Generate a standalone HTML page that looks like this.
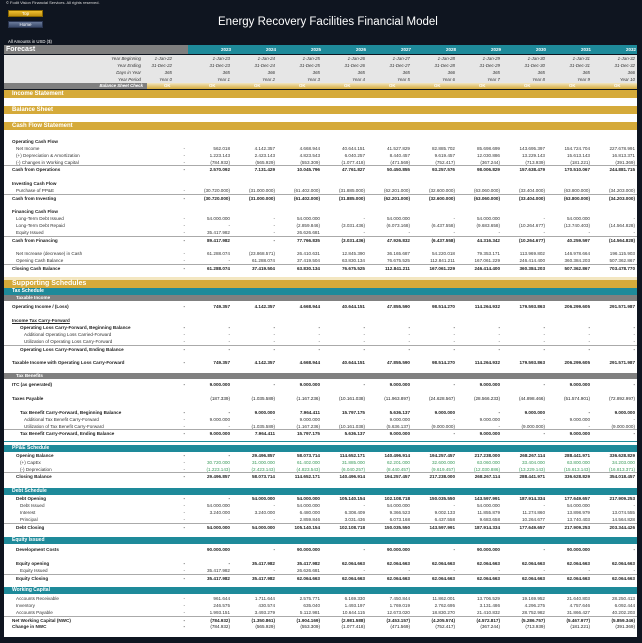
<!DOCTYPE html>
<html><head><meta charset="utf-8">
<style>
*{margin:0;padding:0;box-sizing:border-box}
body{width:642px;height:643px;background:#0f1520;position:relative;overflow:hidden;font-family:"Liberation Sans",sans-serif}
.white{position:absolute;left:4px;top:90px;width:633px;height:547px;background:#fff}
.r{position:absolute;left:4px;width:633px;height:7px;display:flex;font-size:4.6px;line-height:7px;color:#333;white-space:nowrap}
.r i{font-style:normal;width:137px;padding-left:8px;overflow:hidden}
.r s{text-decoration:none;width:45px;text-align:right;padding-right:1px}
.b{font-weight:bold;color:#222}
.t{border-top:1px solid #aaa}
.i1 i{padding-left:12px}.i2 i{padding-left:16px}.i3 i{padding-left:20px}
.g s{color:#3a9a5a}
.bar{position:absolute;left:4px;width:633px;color:#fff;font-weight:bold;padding-left:8px}
.gold{background:#d5aa3a;height:8px;font-size:6px;line-height:8px}
.teal{background:#1e8a9a;height:7px;font-size:5px;line-height:7px}
.grey{background:#808080;height:6px;font-size:4.6px;line-height:6px}
.hd{position:absolute;left:4px;width:633px;height:7px;display:flex;font-size:4.4px;line-height:7px;color:#333;font-style:italic;background:#e6e6e6}
.hd i{width:141px;text-align:right;padding-right:4px}
.hd s{text-decoration:none;width:45px;text-align:right;padding-right:1px}
.hd s:nth-of-type(1){width:28px}
.hd s:nth-of-type(2){width:58px}
</style></head><body>
<div style="position:absolute;left:6px;top:0;font-size:4px;color:#ddd">© Fodit Vision Financial Services. All rights reserved.</div>
<div style="position:absolute;left:8px;top:10px;width:35px;height:7px;background:linear-gradient(#f0c030,#c09010);border:1px solid #886600;font-size:4.5px;color:#fff;text-align:center;line-height:5px">Top</div>
<div style="position:absolute;left:8px;top:21px;width:35px;height:7px;background:linear-gradient(#6a7a9a,#3a4a6a);border:1px solid #2a3550;font-size:4.5px;color:#fff;text-align:center;line-height:5px">Home</div>
<div style="position:absolute;left:218px;top:16px;font-size:11.5px;color:#fff">Energy Recovery Facilities Financial Model</div>
<div style="position:absolute;left:8px;top:39px;font-size:4.3px;color:#fff">All Amounts in USD ($)</div>

<div style="position:absolute;left:4px;top:45px;width:184px;height:9px;background:#7f7f7f;color:#fff;font-weight:bold;font-size:7px;line-height:9px;padding-left:2px">Forecast</div>
<div style="position:absolute;left:188px;top:45px;width:449px;height:9px;background:#1e8a9a;display:flex;font-size:4.5px;line-height:9px;color:#fff;font-weight:bold">
<span style="width:43px;text-align:right">2023</span><span style="width:45px;text-align:right">2024</span><span style="width:45px;text-align:right">2025</span><span style="width:45px;text-align:right">2026</span><span style="width:45px;text-align:right">2027</span><span style="width:45px;text-align:right">2028</span><span style="width:45px;text-align:right">2029</span><span style="width:45px;text-align:right">2030</span><span style="width:45px;text-align:right">2031</span><span style="width:45px;text-align:right">2032</span></div>
<div class="hd" style="top:55px"><i>Year Beginning</i><s>1-Jan-22</s><s>1-Jan-23</s><s>1-Jan-24</s><s>1-Jan-25</s><s>1-Jan-26</s><s>1-Jan-27</s><s>1-Jan-28</s><s>1-Jan-29</s><s>1-Jan-30</s><s>1-Jan-31</s><s>1-Jan-32</s></div>
<div class="hd" style="top:62px"><i>Year Ending</i><s>31-Dec-22</s><s>31-Dec-23</s><s>31-Dec-24</s><s>31-Dec-25</s><s>31-Dec-26</s><s>31-Dec-27</s><s>31-Dec-28</s><s>31-Dec-29</s><s>31-Dec-30</s><s>31-Dec-31</s><s>31-Dec-32</s></div>
<div class="hd" style="top:69px"><i>Days in Year</i><s>365</s><s>365</s><s>366</s><s>365</s><s>365</s><s>365</s><s>366</s><s>365</s><s>365</s><s>365</s><s>366</s></div>
<div class="hd" style="top:76px"><i>Year Period</i><s>Year 0</s><s>Year 1</s><s>Year 2</s><s>Year 3</s><s>Year 4</s><s>Year 5</s><s>Year 6</s><s>Year 7</s><s>Year 8</s><s>Year 9</s><s>Year 10</s></div>
<div style="position:absolute;left:4px;top:83px;width:143px;height:6px;background:#7f7f7f;color:#fff;font-style:italic;font-weight:bold;font-size:4.3px;line-height:6px;text-align:right;padding-right:4px">Balance Sheet Check</div>
<div style="position:absolute;left:147px;top:83px;width:490px;height:6px;background:linear-gradient(#f3e6c0,#d5aa3a);display:flex;font-size:4.3px;line-height:6px;color:#fff;font-weight:bold">
<span style="width:45px;padding-left:17px">OK</span><span style="width:45px;padding-left:17px">OK</span><span style="width:45px;padding-left:17px">OK</span><span style="width:45px;padding-left:17px">OK</span><span style="width:45px;padding-left:17px">OK</span><span style="width:45px;padding-left:17px">OK</span><span style="width:45px;padding-left:17px">OK</span><span style="width:45px;padding-left:17px">OK</span><span style="width:45px;padding-left:17px">OK</span><span style="width:45px;padding-left:17px">OK</span><span style="width:40px;padding-left:17px">OK</span></div>

<div class="white"></div>
<div class="bar gold" style="top:90px">Income Statement</div>
<div class="bar gold" style="top:106px">Balance Sheet</div>
<div class="bar gold" style="top:122px">Cash Flow Statement</div>

<div class="r b" style="top:138px"><i>Operating Cash Flow</i></div>
<div class="r i1" style="top:145px"><i>Net Income</i><s>-</s><s>562.018</s><s>4.142.357</s><s>4.668.944</s><s>40.644.151</s><s>41.527.829</s><s>82.885.702</s><s>85.698.699</s><s>143.695.397</s><s>154.724.704</s><s>227.678.991</s></div>
<div class="r i1" style="top:152px"><i>(+) Depreciation &amp; Amortization</i><s>-</s><s>1.223.143</s><s>2.423.143</s><s>4.823.543</s><s>6.040.257</s><s>8.440.457</s><s>9.619.457</s><s>12.030.886</s><s>13.229.143</s><s>15.613.143</s><s>16.813.371</s></div>
<div class="r i1" style="top:159px"><i>(-) Changes in Working Capital</i><s>-</s><s>(784.932)</s><s>(565.929)</s><s>(553.309)</s><s>(1.077.418)</s><s>(471.569)</s><s>(752.417)</s><s>(367.244)</s><s>(713.939)</s><s>(181.221)</s><s>(391.369)</s></div>
<div class="r b t" style="top:165px"><i>Cash from Operations</i><s>-</s><s>2.570.092</s><s>7.131.429</s><s>10.045.796</s><s>47.761.827</s><s>50.450.855</s><s>93.257.576</s><s>98.006.829</s><s>157.638.479</s><s>170.510.067</s><s>244.881.715</s></div>
<div class="r b" style="top:180px"><i>Investing Cash Flow</i></div>
<div class="r i1" style="top:187px"><i>Purchase of PP&amp;E</i><s>-</s><s>(30.720.000)</s><s>(31.000.000)</s><s>(61.402.000)</s><s>(31.885.000)</s><s>(62.201.000)</s><s>(32.600.000)</s><s>(63.060.000)</s><s>(33.404.000)</s><s>(63.800.000)</s><s>(34.203.000)</s></div>
<div class="r b t" style="top:194px"><i>Cash from Investing</i><s>-</s><s>(30.720.000)</s><s>(31.000.000)</s><s>(61.402.000)</s><s>(31.885.000)</s><s>(62.201.000)</s><s>(32.600.000)</s><s>(63.060.000)</s><s>(33.404.000)</s><s>(63.800.000)</s><s>(34.203.000)</s></div>
<div class="r b" style="top:208px"><i>Financing Cash Flow</i></div>
<div class="r i1" style="top:215px"><i>Long-Term Debt Issued</i><s>-</s><s>54.000.000</s><s>-</s><s>54.000.000</s><s>-</s><s>54.000.000</s><s>-</s><s>54.000.000</s><s>-</s><s>54.000.000</s><s>-</s></div>
<div class="r i1" style="top:222px"><i>Long-Term Debt Repaid</i><s>-</s><s>-</s><s>-</s><s>(2.859.846)</s><s>(3.031.436)</s><s>(6.073.168)</s><s>(6.437.558)</s><s>(9.683.658)</s><s>(10.264.677)</s><s>(13.740.403)</s><s>(14.564.828)</s></div>
<div class="r i1" style="top:229px"><i>Equity Issued</i><s>-</s><s>35.417.982</s><s>-</s><s>26.626.681</s><s>-</s><s>-</s><s>-</s><s>-</s><s>-</s><s>-</s><s>-</s></div>
<div class="r b t" style="top:236px"><i>Cash from Financing</i><s>-</s><s>89.417.982</s><s>-</s><s>77.766.835</s><s>(3.031.436)</s><s>47.926.832</s><s>(6.437.558)</s><s>44.316.342</s><s>(10.264.677)</s><s>40.259.597</s><s>(14.564.828)</s></div>
<div class="r i1" style="top:250px"><i>Net Increase (decrease) in Cash</i><s>-</s><s>61.288.074</s><s>(23.868.571)</s><s>26.410.631</s><s>12.845.390</s><s>36.165.687</s><s>54.220.018</s><s>79.353.171</s><s>113.969.802</s><s>146.978.664</s><s>196.115.903</s></div>
<div class="r i1" style="top:257px"><i>Opening Cash Balance</i><s>-</s><s>-</s><s>61.288.074</s><s>37.419.504</s><s>63.830.134</s><s>76.675.525</s><s>112.841.211</s><s>167.061.229</s><s>246.414.400</s><s>360.384.203</s><s>507.362.867</s></div>
<div class="r b t" style="top:264px"><i>Closing Cash Balance</i><s>-</s><s>61.288.074</s><s>37.419.504</s><s>63.830.134</s><s>76.675.525</s><s>112.841.211</s><s>167.061.229</s><s>246.414.400</s><s>360.384.203</s><s>507.362.867</s><s>703.478.770</s></div>
<div style="position:absolute;left:4px;top:277px;width:633px;height:3px;background:#f3e6c0"></div>
<div class="bar gold" style="top:280px;font-size:7px">Supporting Schedules</div>
<div class="bar teal" style="top:288px">Tax Schedule</div>
<div class="bar grey" style="top:295px;padding-left:12px">Taxable Income</div>
<div class="r b" style="top:303px"><i>Operating Income / (Loss)</i><s>-</s><s>749.357</s><s>4.142.357</s><s>4.668.944</s><s>40.644.151</s><s>47.855.590</s><s>98.514.270</s><s>114.264.932</s><s>179.593.863</s><s>206.299.605</s><s>291.571.987</s></div>
<div class="r b" style="top:317px"><i style="text-decoration:underline">Income Tax Carry-Forward</i></div>
<div class="r b i2" style="top:324px"><i>Operating Loss Carry-Forward, Beginning Balance</i><s>-</s><s>-</s><s>-</s><s>-</s><s>-</s><s>-</s><s>-</s><s>-</s><s>-</s><s>-</s><s>-</s></div>
<div class="r i3" style="top:331px"><i>Additional Operating Loss Carried-Forward</i><s>-</s><s>-</s><s>-</s><s>-</s><s>-</s><s>-</s><s>-</s><s>-</s><s>-</s><s>-</s><s>-</s></div>
<div class="r i3" style="top:338px"><i>Utilization of Operating Loss Carry-Forward</i><s>-</s><s>-</s><s>-</s><s>-</s><s>-</s><s>-</s><s>-</s><s>-</s><s>-</s><s>-</s><s>-</s></div>
<div class="r b i2 t" style="top:345px"><i>Operating Loss Carry-Forward, Ending Balance</i><s>-</s><s>-</s><s>-</s><s>-</s><s>-</s><s>-</s><s>-</s><s>-</s><s>-</s><s>-</s><s>-</s></div>
<div class="r b" style="top:359px"><i>Taxable Income with Operating Loss Carry-Forward</i><s>-</s><s>749.357</s><s>4.142.357</s><s>4.668.944</s><s>40.644.151</s><s>47.855.590</s><s>98.514.270</s><s>114.264.932</s><s>179.593.863</s><s>206.299.605</s><s>291.571.987</s></div>
<div class="bar grey" style="top:373px;padding-left:12px">Tax Benefits</div>
<div class="r b" style="top:381px"><i>ITC (as generated)</i><s>-</s><s>9.000.000</s><s>-</s><s>9.000.000</s><s>-</s><s>9.000.000</s><s>-</s><s>9.000.000</s><s>-</s><s>9.000.000</s><s>-</s></div>
<div class="r b" style="top:395px"><i>Taxes Payable</i><s></s><s style="font-weight:normal">(187.339)</s><s style="font-weight:normal">(1.035.589)</s><s style="font-weight:normal">(1.167.236)</s><s style="font-weight:normal">(10.161.038)</s><s style="font-weight:normal">(11.963.897)</s><s style="font-weight:normal">(24.628.567)</s><s style="font-weight:normal">(28.566.233)</s><s style="font-weight:normal">(44.898.466)</s><s style="font-weight:normal">(51.574.901)</s><s style="font-weight:normal">(72.892.997)</s></div>
<div class="r b i2" style="top:409px"><i>Tax Benefit Carry-Forward, Beginning Balance</i><s>-</s><s>-</s><s>9.000.000</s><s>7.964.411</s><s>15.797.175</s><s>5.636.137</s><s>9.000.000</s><s>-</s><s>9.000.000</s><s>-</s><s>9.000.000</s></div>
<div class="r i3" style="top:416px"><i>Additional Tax Benefit Carry-Forward</i><s>-</s><s>9.000.000</s><s>-</s><s>9.000.000</s><s>-</s><s>9.000.000</s><s>-</s><s>9.000.000</s><s>-</s><s>9.000.000</s><s>-</s></div>
<div class="r i3" style="top:423px"><i>Utilization of Tax Benefit Carry-Forward</i><s>-</s><s>-</s><s>(1.035.589)</s><s>(1.167.236)</s><s>(10.161.038)</s><s>(5.636.137)</s><s>(9.000.000)</s><s>-</s><s>(9.000.000)</s><s>-</s><s>(9.000.000)</s></div>
<div class="r b i2 t" style="top:429px"><i>Tax Benefit Carry-Forward, Ending Balance</i><s>-</s><s>9.000.000</s><s>7.964.411</s><s>15.797.175</s><s>5.636.137</s><s>9.000.000</s><s>-</s><s>9.000.000</s><s>-</s><s>9.000.000</s><s>-</s></div>
<div style="position:absolute;left:4px;top:441px;width:633px;height:1px;background:#1e8a9a"></div>

<div class="bar teal" style="top:445px">PP&amp;E Schedule</div>
<div class="r b i1" style="top:452px"><i>Opening Balance</i><s>-</s><s>-</s><s>29.496.857</s><s>58.073.714</s><s>114.652.171</s><s>140.496.914</s><s>194.257.457</s><s>217.238.000</s><s>268.267.114</s><s>288.441.971</s><s>336.628.829</s></div>
<div class="r i2 g" style="top:459px"><i>(+) CapEx</i><s style="color:#333">-</s><s>30.720.000</s><s>31.000.000</s><s>61.402.000</s><s>31.885.000</s><s>62.201.000</s><s>32.600.000</s><s>63.060.000</s><s>33.404.000</s><s>63.800.000</s><s>34.203.000</s></div>
<div class="r i2 g" style="top:466px"><i>(-) Depreciation</i><s style="color:#333">-</s><s>(1.223.143)</s><s>(2.423.143)</s><s>(4.823.543)</s><s>(6.040.257)</s><s>(8.440.457)</s><s>(9.619.457)</s><s>(12.030.886)</s><s>(13.229.143)</s><s>(15.613.143)</s><s>(16.813.371)</s></div>
<div class="r b i1 t" style="top:472px"><i>Closing Balance</i><s>-</s><s>29.496.857</s><s>58.073.714</s><s>114.652.171</s><s>140.496.914</s><s>194.257.457</s><s>217.238.000</s><s>268.267.114</s><s>288.441.971</s><s>336.628.829</s><s>354.018.457</s></div>

<div class="bar teal" style="top:488px">Debt Schedule</div>
<div class="r b i1" style="top:495px"><i>Debt Opening</i><s>-</s><s>-</s><s>54.000.000</s><s>54.000.000</s><s>105.140.154</s><s>102.108.718</s><s>150.035.550</s><s>143.597.991</s><s>187.914.334</s><s>177.649.657</s><s>217.909.253</s></div>
<div class="r i2" style="top:502px"><i>Debt Issued</i><s>-</s><s>54.000.000</s><s>-</s><s>54.000.000</s><s>-</s><s>54.000.000</s><s>-</s><s>54.000.000</s><s>-</s><s>54.000.000</s><s>-</s></div>
<div class="r i2" style="top:509px"><i>Interest</i><s>-</s><s>3.240.000</s><s>3.240.000</s><s>6.480.000</s><s>6.308.409</s><s>9.366.523</s><s>9.002.133</s><s>11.855.879</s><s>11.274.860</s><s>13.898.979</s><s>13.074.555</s></div>
<div class="r i2" style="top:516px"><i>Principal</i><s>-</s><s>-</s><s>-</s><s>2.859.846</s><s>3.031.436</s><s>6.073.168</s><s>6.437.558</s><s>9.683.658</s><s>10.264.677</s><s>13.740.403</s><s>14.564.828</s></div>
<div class="r b i1 t" style="top:523px"><i>Debt Closing</i><s>-</s><s>54.000.000</s><s>54.000.000</s><s>105.140.154</s><s>102.108.718</s><s>150.035.550</s><s>143.597.991</s><s>187.914.334</s><s>177.649.657</s><s>217.909.253</s><s>203.344.426</s></div>

<div class="bar teal" style="top:537px">Equity Issued</div>
<div class="r b i1" style="top:546px"><i>Development Costs</i><s></s><s>90.000.000</s><s>-</s><s>90.000.000</s><s>-</s><s>90.000.000</s><s>-</s><s>90.000.000</s><s>-</s><s>90.000.000</s><s>-</s></div>
<div class="r b i1" style="top:560px"><i>Equity opening</i><s>-</s><s>-</s><s>35.417.982</s><s>35.417.982</s><s>62.064.663</s><s>62.064.663</s><s>62.064.663</s><s>62.064.663</s><s>62.064.663</s><s>62.064.663</s><s>62.064.663</s></div>
<div class="r i2" style="top:567px"><i>Equity Issued</i><s>-</s><s>35.417.982</s><s>-</s><s>26.626.681</s><s>-</s><s>-</s><s>-</s><s>-</s><s>-</s><s>-</s><s>-</s></div>
<div class="r b i1 t" style="top:574px"><i>Equity Closing</i><s>-</s><s>35.417.982</s><s>35.417.982</s><s>62.064.663</s><s>62.064.663</s><s>62.064.663</s><s>62.064.663</s><s>62.064.663</s><s>62.064.663</s><s>62.064.663</s><s>62.064.663</s></div>

<div class="bar teal" style="top:587px">Working Capital</div>
<div class="r i1" style="top:595px"><i>Accounts Receivable</i><s>-</s><s>961.644</s><s>1.711.644</s><s>2.575.771</s><s>6.169.330</s><s>7.450.844</s><s>11.862.001</s><s>13.706.529</s><s>19.169.952</s><s>21.640.803</s><s>28.250.413</s></div>
<div class="r i1" style="top:602px"><i>Inventory</i><s>-</s><s>246.575</s><s>430.574</s><s>635.040</s><s>1.493.197</s><s>1.769.019</s><s>2.762.695</s><s>3.131.486</s><s>4.296.275</s><s>4.757.646</s><s>6.092.444</s></div>
<div class="r i1" style="top:609px"><i>Accounts Payable</i><s>-</s><s>1.993.151</s><s>3.493.279</s><s>5.112.981</s><s>10.644.115</s><s>12.673.020</s><s>18.830.270</s><s>21.410.832</s><s>28.752.982</s><s>31.866.427</s><s>40.202.203</s></div>
<div class="r b t" style="top:616px"><i>Net Working Capital (NWC)</i><s>-</s><s>(784.932)</s><s>(1.350.861)</s><s>(1.904.169)</s><s>(2.981.588)</s><s>(3.453.157)</s><s>(4.205.574)</s><s>(4.572.817)</s><s>(5.286.757)</s><s>(5.467.977)</s><s>(5.859.346)</s></div>
<div class="r b" style="top:623px"><i>Change in NWC</i><s>-</s><s style="font-weight:normal">(784.932)</s><s style="font-weight:normal">(565.929)</s><s style="font-weight:normal">(553.309)</s><s style="font-weight:normal">(1.077.418)</s><s style="font-weight:normal">(471.569)</s><s style="font-weight:normal">(752.417)</s><s style="font-weight:normal">(367.244)</s><s style="font-weight:normal">(713.939)</s><s style="font-weight:normal">(181.221)</s><s style="font-weight:normal">(391.369)</s></div>
</body></html>
